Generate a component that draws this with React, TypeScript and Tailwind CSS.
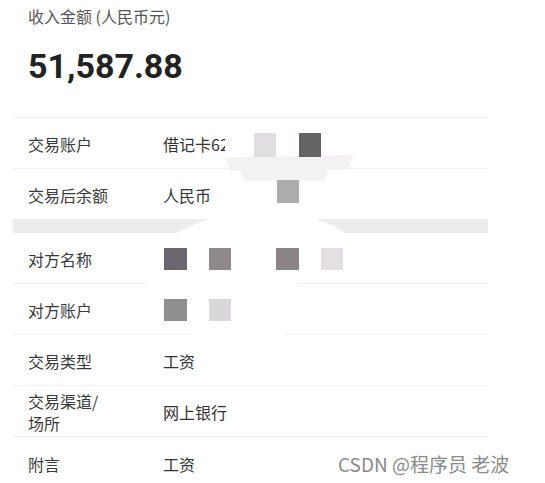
import React from "react";

const font = { fontFamily: '"Noto Sans CJK SC", "Noto Sans", sans-serif' };

function InfoRow({ label, value, last }: { label: React.ReactNode; value?: React.ReactNode; last?: boolean }) {
  return (
    <div
      className={
        "flex h-[51px] items-center px-[15px] pt-[2px] text-[16px] leading-[22px] " +
        (last ? "" : "border-b border-[#efefef]")
      }
    >
      <div className="w-[135px] shrink-0 text-[#3a3a3a]">{label}</div>
      <div className="flex items-center text-[#333]">{value}</div>
    </div>
  );
}

function Sq({ c, w = 22 }: { c: string; w?: number }) {
  return <div className="h-[22px] shrink-0" style={{ width: w, background: c }} />;
}

export default function App() {
  return (
    <div className="relative h-[483px] w-[545px] overflow-hidden bg-white" style={font}>
      <div className="pl-[28px] pt-[4px]">
        <div className="text-[16px] leading-[24px] text-[#555]">收入金额 (人民币元)</div>
        <div
          className="mt-[18px] text-[34px] font-bold leading-[40px] text-[#222]"
          style={{ fontFamily: 'Roboto, "Liberation Sans", sans-serif' }}
        >
          51,587.88
        </div>
      </div>

      <div className="ml-[13px] mt-[31px] w-[475px] border-t border-[#efefef]">
        <InfoRow label="交易账户" value={<span>借记卡62</span>} />
        <div className="flex h-[50px] items-center px-[15px] pt-[2px] text-[16px] leading-[22px]">
          <div className="w-[135px] shrink-0 text-[#3a3a3a]">交易后余额</div>
          <span className="text-[#333]">人民币</span>
        </div>
        <div className="h-[14px] bg-[#ececec]" />
        <InfoRow
          label="对方名称"
          value={
            <div className="ml-[1px] flex items-center">
              <Sq c="#6b666d" w={23} />
              <div className="w-[22px]" />
              <Sq c="#8e888b" />
              <div className="w-[45px]" />
              <Sq c="#8c8588" w={23} />
              <div className="w-[22px]" />
              <Sq c="#e4dfe2" />
            </div>
          }
        />
        <InfoRow
          label="对方账户"
          value={
            <div className="ml-[1px] flex items-center">
              <Sq c="#918e90" w={23} />
              <div className="w-[22px]" />
              <Sq c="#d9d7d9" />
            </div>
          }
        />
        <InfoRow label="交易类型" value="工资" />
        <InfoRow
          label={
            <>
              交易渠道/
              <br />
              场所
            </>
          }
          value="网上银行"
        />
        <InfoRow label="附言" value="工资" last />
      </div>

      {/* blur / mask artifacts over the rows */}
      <div className="absolute left-[225px] top-[136px] h-[20px] w-[26px] bg-white" />
      <div className="absolute left-[212px] top-[186px] h-[20px] w-[30px] bg-white" />
      <div className="absolute left-[225px] top-[155px] h-[26px] w-[128px] bg-[#f3f1f4] [clip-path:polygon(0_10%,100%_0,96%_55%,80%_60%,78%_100%,15%_100%,12%_60%,4%_62%)]" />
      <div className="absolute left-[172px] top-[218px] h-[17px] w-[176px] bg-white [clip-path:polygon(0_100%,12%_40%,22%_0,80%_0,92%_45%,100%_100%)]" />
      <div className="absolute left-[145px] top-[282px] h-[4px] w-[152px] bg-white" />
      <div className="absolute left-[192px] top-[333px] h-[4px] w-[93px] bg-white" />
      <div className="absolute left-[254px] top-[133px] h-[24px] w-[22px] bg-[#e0dee1]" />
      <div className="absolute left-[299px] top-[133px] h-[24px] w-[22px] bg-[#666366]" />
      <div className="absolute left-[277px] top-[180px] h-[23px] w-[22px] bg-[#adabad]" />

      <div className="absolute left-[338px] top-[451px] text-[19px] leading-[26px] text-[#8a8a8a]">
        CSDN @程序员 老波
      </div>
    </div>
  );
}
